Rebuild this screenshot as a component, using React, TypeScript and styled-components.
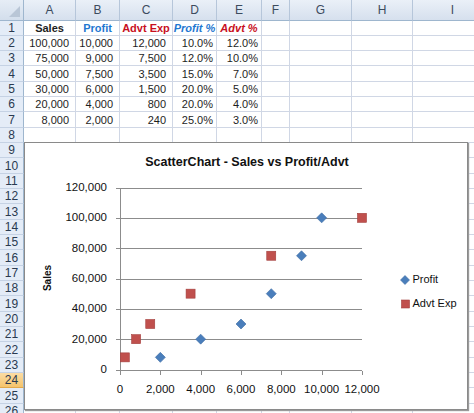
import React from "react";
import styled, { createGlobalStyle } from "styled-components";

const Global = createGlobalStyle`
  html, body { margin: 0; padding: 0; background: #ffffff; }
  body { font-family: "Liberation Sans", Arial, sans-serif; overflow: hidden; }
`;

const COLS = ["A", "B", "C", "D", "E", "F", "G", "H", "I"];
const ROW_COUNT = 27;

const Page = styled.div`
  position: relative;
  width: 474px;
  height: 413px;
  overflow: hidden;
  background: #ffffff;
`;

const Sheet = styled.div`
  display: grid;
  grid-template-columns: 24px 52px 44px 53px 44px 45px 28px 62px 61px 80px;
  grid-template-rows: 20.5px repeat(${ROW_COUNT}, 15.33px);
  font-size: 11px;
  color: #1e1e1e;
`;

const Corner = styled.div`
  position: relative;
  background: linear-gradient(#e6edf6, #d3deec);
  border-right: 1px solid #9eb6ce;
  border-bottom: 1px solid #9eb6ce;
  box-sizing: border-box;
  &::after {
    content: "";
    position: absolute;
    right: 3px;
    bottom: 3px;
    width: 0;
    height: 0;
    border-left: 11px solid transparent;
    border-bottom: 11px solid #b9c6d6;
  }
`;

const ColHeader = styled.div`
  display: flex;
  align-items: center;
  justify-content: center;
  background: linear-gradient(#eaf0f8, #d6e0ee);
  border-right: 1px solid #b6c6da;
  border-bottom: 1px solid #9eb6ce;
  box-sizing: border-box;
  color: #3c4b5e;
  font-size: 12px;
`;

const RowHeader = styled.div<{ $active?: boolean }>`
  display: flex;
  align-items: center;
  justify-content: center;
  background: ${(p) =>
    p.$active ? "linear-gradient(#fbdca4, #f5c46c)" : "#e4ecf7"};
  border-right: 1px solid #9eb6ce;
  border-bottom: 1px solid ${(p) => (p.$active ? "#e2a94a" : "#c5d2e4")};
  box-sizing: border-box;
  color: #2a3a50;
  font-size: 12px;
`;

const Cell = styled.div<{
  $align?: "left" | "center" | "right";
  $color?: string;
  $bold?: boolean;
  $italic?: boolean;
  $pad?: number;
}>`
  display: flex;
  align-items: center;
  justify-content: ${(p) =>
    p.$align === "center" ? "center" : p.$align === "right" ? "flex-end" : "flex-start"};
  padding-right: ${(p) => p.$pad ?? 0}px;
  border-right: 1px solid #d0d7e5;
  border-bottom: 1px solid #d0d7e5;
  box-sizing: border-box;
  white-space: nowrap;
  overflow: visible;
  color: ${(p) => p.$color ?? "#1e1e1e"};
  font-weight: ${(p) => (p.$bold ? 700 : 400)};
  font-style: ${(p) => (p.$italic ? "italic" : "normal")};
`;

const ChartFrame = styled.div`
  position: absolute;
  left: 24px;
  top: 142px;
  width: 444px;
  height: 268px;
  background: #ffffff;
  border: 1px solid #8a8a8a;
  box-sizing: border-box;
  box-shadow: 1px 1px 1px #9a9a9a;
`;

const ChartSvg = styled.svg`
  display: block;
  width: 442px;
  height: 266px;
  font-family: "Liberation Sans", Arial, sans-serif;
`;

type CellDef = {
  text: string;
  color?: string;
  bold?: boolean;
  italic?: boolean;
  align?: "left" | "center" | "right";
  pad?: number;
};

const BLUE = "#1f78d1";
const RED = "#c8101e";

const headerRow: CellDef[] = [
  { text: "Sales", bold: true, align: "center" },
  { text: "Profit", bold: true, color: BLUE, align: "center" },
  { text: "Advt Exp", bold: true, color: RED, align: "center" },
  { text: "Profit %", bold: true, italic: true, color: BLUE, align: "center" },
  { text: "Advt %", bold: true, italic: true, color: RED, align: "center" },
];

const data = [
  ["100,000", "10,000", "12,000", "10.0%", "12.0%"],
  ["75,000", "9,000", "7,500", "12.0%", "10.0%"],
  ["50,000", "7,500", "3,500", "15.0%", "7.0%"],
  ["30,000", "6,000", "1,500", "20.0%", "5.0%"],
  ["20,000", "4,000", "800", "20.0%", "4.0%"],
  ["8,000", "2,000", "240", "25.0%", "3.0%"],
];

function rowCells(r: number): CellDef[] {
  if (r === 1) return headerRow;
  const d = data[r - 2];
  if (d) {
    return d.map((t, i) => ({ text: t, align: "right", pad: i < 3 ? 6 : 3 }));
  }
  return [];
}

const profit = [
  [10000, 100000],
  [9000, 75000],
  [7500, 50000],
  [6000, 30000],
  [4000, 20000],
  [2000, 8000],
];
const advt = [
  [12000, 100000],
  [7500, 75000],
  [3500, 50000],
  [1500, 30000],
  [800, 20000],
  [240, 8000],
];

const X0 = 120;
const X1 = 362;
const Y0 = 369.5;
const Y1 = 187.5;
const px = (v: number) => X0 + (v / 12000) * (X1 - X0);
const py = (v: number) => Y0 - (v / 120000) * (Y0 - Y1);

const Diamond = ({ x, y, r = 5 }: { x: number; y: number; r?: number }) => (
  <polygon
    points={`${x},${y - r} ${x + r},${y} ${x},${y + r} ${x - r},${y}`}
    fill="#4a7ebb"
    stroke="#3d6ca3"
    strokeWidth={0.6}
  />
);

const Square = ({ x, y, s = 9 }: { x: number; y: number; s?: number }) => (
  <rect
    x={x - s / 2}
    y={y - s / 2}
    width={s}
    height={s}
    fill="#c0504d"
    stroke="#a33f3c"
    strokeWidth={0.6}
  />
);

const fmt = (n: number) => n.toLocaleString("en-US");

function Chart() {
  const yTicks = [0, 20000, 40000, 60000, 80000, 100000, 120000];
  const xTicks = [0, 2000, 4000, 6000, 8000, 10000, 12000];
  return (
    <ChartFrame>
      <ChartSvg viewBox="25 143 442 266">
        <text
          x={247}
          y={162.5}
          textAnchor="middle"
          dominantBaseline="middle"
          fontWeight={700}
          fontSize={12.5}
          fill="#111"
        >
          ScatterChart - Sales vs Profit/Advt
        </text>
        {yTicks.map((v) => (
          <g key={"y" + v}>
            <line
              x1={X0 - 4}
              x2={X1}
              y1={Math.round(py(v)) + 0.5}
              y2={Math.round(py(v)) + 0.5}
              stroke="#8c8c8c"
              strokeWidth={1}
              shapeRendering="crispEdges"
            />
            <text
              x={107}
              y={py(v) + 0.5}
              textAnchor="end"
              dominantBaseline="middle"
              fontSize={11.5}
              fill="#111"
            >
              {fmt(v)}
            </text>
          </g>
        ))}
        <line
          x1={X0 + 0.5}
          x2={X0 + 0.5}
          y1={Math.round(py(120000)) + 0.5}
          y2={Math.round(Y0) + 4.5}
          stroke="#8c8c8c"
          strokeWidth={1}
          shapeRendering="crispEdges"
        />
        {xTicks.map((v) => (
          <g key={"x" + v}>
            <line
              x1={Math.round(px(v)) + 0.5}
              x2={Math.round(px(v)) + 0.5}
              y1={Math.round(Y0) + 0.5}
              y2={Math.round(Y0) + 4.5}
              stroke="#8c8c8c"
              strokeWidth={1}
              shapeRendering="crispEdges"
            />
            <text
              x={px(v)}
              y={389.5}
              textAnchor="middle"
              dominantBaseline="middle"
              fontSize={11.5}
              fill="#111"
            >
              {fmt(v)}
            </text>
          </g>
        ))}
        <text
          x={0}
          y={0}
          transform="translate(48.5 278) rotate(-90)"
          textAnchor="middle"
          dominantBaseline="middle"
          fontWeight={700}
          fontSize={10}
          fill="#111"
        >
          Sales
        </text>
        {advt.map(([a, b], i) => (
          <Square key={"a" + i} x={px(a)} y={py(b)} />
        ))}
        {profit.map(([a, b], i) => (
          <Diamond key={"p" + i} x={px(a)} y={py(b)} />
        ))}
        <Diamond x={405} y={280} r={4.5} />
        <text x={412.5} y={280.5} dominantBaseline="middle" fontSize={11} fill="#111">
          Profit
        </text>
        <Square x={405.5} y={304} s={8} />
        <text x={412.5} y={304.5} dominantBaseline="middle" fontSize={11} fill="#111">
          Advt Exp
        </text>
      </ChartSvg>
    </ChartFrame>
  );
}

export default function App() {
  const rows = Array.from({ length: ROW_COUNT }, (_, i) => i + 1);
  return (
    <Page>
      <Global />
      <Sheet>
        <Corner />
        {COLS.map((c) => (
          <ColHeader key={c}>{c}</ColHeader>
        ))}
        {rows.map((r) => {
          const cells = rowCells(r);
          return (
            <React.Fragment key={r}>
              <RowHeader $active={r === 24}>{r}</RowHeader>
              {COLS.map((_, ci) => {
                const c = cells[ci];
                return c ? (
                  <Cell
                    key={ci}
                    $align={c.align}
                    $color={c.color}
                    $bold={c.bold}
                    $italic={c.italic}
                    $pad={c.pad}
                  >
                    {c.text}
                  </Cell>
                ) : (
                  <Cell key={ci} />
                );
              })}
            </React.Fragment>
          );
        })}
      </Sheet>
      <Chart />
    </Page>
  );
}
